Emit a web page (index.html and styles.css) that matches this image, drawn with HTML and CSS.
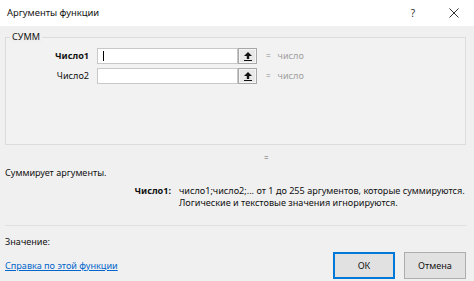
FILE: index.html
```html
<!DOCTYPE html>
<html lang="ru">
<head>
    <meta charset="UTF-8">
    <title>Аргументы функции</title>
    <link rel="stylesheet" href="styles.css">
</head>
<body>
    <div class="dialog">
        <div class="titlebar">
            <span class="title">Аргументы функции</span>
            <span class="title-btn help">?</span>
            <span class="title-btn close">
                <svg width="10" height="10" viewBox="0 0 10 10"><path d="M0.5 0.5L9.5 9.5M9.5 0.5L0.5 9.5" stroke="#333" stroke-width="1"/></svg>
            </span>
        </div>

        <div class="content">
            <div class="func-box">
                <div class="func-name">СУММ</div>
                <div class="arg-row">
                    <label class="arg-label bold">Число1</label>
                    <div class="arg-input"><span class="caret"></span></div>
                    <div class="ref-btn">
                        <svg width="8" height="9" viewBox="0 0 8 9"><path d="M4 0L0 4H2.8V7H5.2V4H8Z" fill="#111"/><rect x="0" y="8" width="8" height="1" fill="#111"/></svg>
                    </div>
                    <span class="eq">=</span>
                    <span class="arg-value">число</span>
                </div>
                <div class="arg-row">
                    <label class="arg-label">Число2</label>
                    <div class="arg-input"></div>
                    <div class="ref-btn">
                        <svg width="8" height="9" viewBox="0 0 8 9"><path d="M4 0L0 4H2.8V7H5.2V4H8Z" fill="#111"/><rect x="0" y="8" width="8" height="1" fill="#111"/></svg>
                    </div>
                    <span class="eq">=</span>
                    <span class="arg-value">число</span>
                </div>
            </div>

            <div class="result-eq">=</div>
            <div class="func-desc">Суммирует аргументы.</div>
            <div class="arg-desc">
                <span class="arg-desc-name">Число1:</span>
                <span class="arg-desc-text">число1;число2;... от 1 до 255 аргументов, которые суммируются.<br>Логические и текстовые значения игнорируются.</span>
            </div>

            <div class="separator"></div>
            <div class="value">Значение:</div>

            <div class="footer">
                <a href="#" class="help-link">Справка по этой функции</a>
                <div class="buttons">
                    <button class="btn btn-default">ОК</button>
                    <button class="btn">Отмена</button>
                </div>
            </div>
        </div>
    </div>
</body>
</html>
```

FILE: styles.css
```css
body {
    margin: 0;
    padding: 0;
    font-family: "Noto Sans", "Open Sans", sans-serif;
    font-size: 9.1px;
    line-height: 12px;
    color: #111;
    background-color: #f0f0f0;
}

.dialog {
    width: 474px;
    height: 281px;
    overflow: hidden;
    background-color: #f0f0f0;
}

.titlebar {
    height: 26px;
    background-color: #fff;
    display: flex;
    align-items: center;
    padding-left: 7px;
}

.title {
    flex: 1;
    font-size: 9.4px;
    color: #111;
}

.title-btn {
    width: 40px;
    text-align: center;
    color: #333;
}

.help {
    font-size: 10px;
    margin-right: 1px;
}

.close {
    display: flex;
    justify-content: center;
    align-items: center;
}

.content {
    padding: 0 8px 0 5px;
}

.func-box {
    margin-top: 11px;
    height: 108px;
    border: 1px solid #dcdcdc;
    background-color: #f2f2f2;
    position: relative;
    box-sizing: border-box;
    padding-top: 10px;
}

.func-name {
    position: absolute;
    top: -7px;
    left: 4px;
    padding: 0 2px;
    background-color: #f0f0f0;
}

.arg-row {
    display: flex;
    align-items: center;
    height: 16px;
    margin-bottom: 4px;
}

.arg-label {
    width: 91px;
    text-align: right;
    padding-right: 8px;
    box-sizing: border-box;
}

.bold {
    font-weight: bold;
}

.arg-input {
    width: 141px;
    height: 16px;
    box-sizing: border-box;
    border: 1px solid #c8c8c8;
    background-color: #fff;
    position: relative;
}

.caret {
    position: absolute;
    left: 5px;
    top: 2px;
    width: 1px;
    height: 10px;
    background-color: #000;
}

.ref-btn {
    width: 19px;
    height: 16px;
    box-sizing: border-box;
    border: 1px solid #a8a8a8;
    background-color: #e8e8e8;
    box-shadow: inset 0 0 0 1px #f6f6f6;
    display: flex;
    justify-content: center;
    align-items: center;
}

.eq {
    margin-left: 9px;
    color: #8a8a8a;
    font-size: 8px;
}

.arg-value {
    margin-left: 7px;
    color: #a0a0a0;
}

.result-eq {
    margin-top: 7px;
    padding-left: 259px;
    color: #666;
    font-size: 8px;
}

.func-desc {
    margin-top: 3px;
}

.arg-desc {
    display: flex;
    margin-top: 6px;
}

.arg-desc-name {
    font-weight: bold;
    width: 174px;
    text-align: right;
    padding-right: 8px;
    box-sizing: border-box;
    flex: none;
}

.separator {
    margin-top: 16px;
    border-top: 1px solid #e0e0e0;
}

.value {
    margin-top: 10px;
}

.footer {
    display: flex;
    align-items: center;
    justify-content: space-between;
    margin-top: 4px;
}

.help-link {
    color: #0066cc;
    text-decoration: underline;
}

.buttons {
    display: flex;
    gap: 9px;
}

.btn {
    width: 62px;
    height: 27px;
    font-family: inherit;
    font-size: 9.1px;
    color: #111;
    background-color: #e1e1e1;
    border: 1px solid #adadad;
    padding: 0;
}

.btn-default {
    border: 2px solid #0078d7;
}
```
